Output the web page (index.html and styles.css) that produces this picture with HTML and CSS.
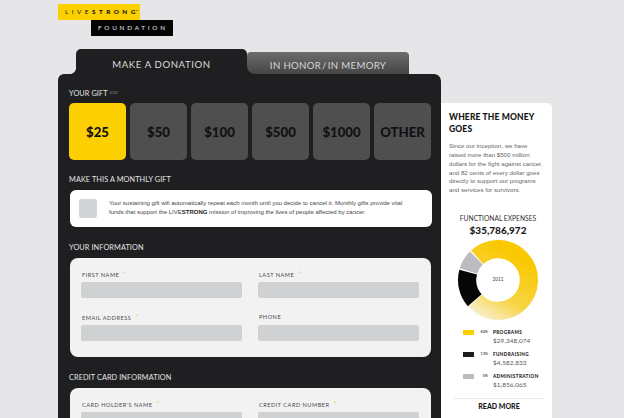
FILE: index.html
```html
<!DOCTYPE html>
<html lang="en">
<head>
<meta charset="utf-8">
<title>Livestrong Foundation</title>
<link rel="stylesheet" href="styles.css">
</head>
<body>
<div class="page">
  <header class="logo">
    <div class="logo-top">LIVE<b>STRON<span class="last">G</span></b><sup>™</sup></div>
    <div class="logo-bottom">FOUNDATION</div>
  </header>
  <nav class="tabs">
    <div class="tab active">MAKE A DONATION</div>
    <div class="tab other">IN HONOR&#8202;/&#8202;IN MEMORY</div>
  </nav>
  <div class="main">
    <form class="panel">
      <h2 class="title first">YOUR GIFT <small>USD</small></h2>
      <div class="amounts">
        <div class="amount selected">$25</div>
        <div class="amount">$50</div>
        <div class="amount">$100</div>
        <div class="amount">$500</div>
        <div class="amount">$1000</div>
        <div class="amount">OTHER</div>
      </div>
      <h2 class="title">MAKE THIS A MONTHLY GIFT</h2>
      <div class="monthly">
        <div class="check"></div>
        <p>Your sustaining gift will automatically repeat each month until you decide to cancel it. Monthly gifts provide vital funds that support the LIVE<b>STRONG</b> mission of improving the lives of people affected by cancer.</p>
      </div>
      <h2 class="title">YOUR INFORMATION</h2>
      <div class="card">
        <div class="field"><label>FIRST NAME <i>*</i></label><div class="input"></div></div>
        <div class="field"><label>LAST NAME <i>*</i></label><div class="input"></div></div>
        <div class="field"><label>EMAIL ADDRESS <i>*</i></label><div class="input"></div></div>
        <div class="field"><label>PHONE</label><div class="input"></div></div>
      </div>
      <h2 class="title">CREDIT CARD INFORMATION</h2>
      <div class="card">
        <div class="field"><label>CARD HOLDER'S NAME <i>*</i></label><div class="input"></div></div>
        <div class="field"><label>CREDIT CARD NUMBER <i>*</i></label><div class="input"></div></div>
      </div>
    </form>
    <aside class="side">
      <h3>WHERE THE MONEY GOES</h3>
      <p class="intro">Since our inception, we have raised more than $500 million dollars for the fight against cancer, and 82 cents of every dollar goes directly to support our programs and services for survivors.</p>
      <div class="fe-title">FUNCTIONAL EXPENSES</div>
      <div class="fe-total">$35,786,972</div>
      <div class="donut">
        <svg width="82" height="82" viewBox="0 0 82 82">
          <defs>
            <linearGradient id="yg" gradientUnits="userSpaceOnUse" x1="60" y1="15" x2="22" y2="80">
              <stop offset="0" stop-color="#f9c800"/>
              <stop offset="0.6" stop-color="#f8d548"/>
              <stop offset="1" stop-color="#f7f1dc"/>
            </linearGradient>
          </defs>
          <path class="seg" stroke="url(#yg)" d="M20.16 18.25 A30.85 30.85 0 1 1 18.25 61.84"/>
          <path class="seg" stroke="#060606" d="M17.72 61.24 A30.85 30.85 0 0 1 11.2 33.02"/>
          <path class="seg" stroke="#bcbcc0" d="M11.5 31.98 A30.85 30.85 0 0 1 19.38 19"/>
        </svg>
        <span>2011</span>
      </div>
      <div class="legend">
        <span class="swatch yellow"></span><span class="pct">82%</span><div class="info"><b>PROGRAMS</b><span>$29,348,074</span></div>
      </div>
      <div class="legend">
        <span class="swatch black"></span><span class="pct">13%</span><div class="info"><b>FUNDRAISING</b><span>$4,582,833</span></div>
      </div>
      <div class="legend">
        <span class="swatch grey"></span><span class="pct">5%</span><div class="info"><b>ADMINISTRATION</b><span>$1,856,065</span></div>
      </div>
      <div class="more">READ MORE</div>
    </aside>
  </div>
</div>
</body>
</html>
```
FILE: styles.css
```css
* { box-sizing: border-box; }
html, body { margin: 0; height: 100%; overflow: hidden; }
body { background: #e6e6e8; font-family: "Lato", sans-serif; }
.page { width: 624px; height: 418px; overflow: hidden; padding: 4px 0 0 58px; }

.logo { height: 32px; width: 115px; }
.logo-top {
  width: 82px; height: 16px; background: #fccf00; color: #111;
  font-size: 6.3px; letter-spacing: 3.5px; line-height: 16px; padding-left: 7px; white-space: nowrap;
}
.logo-top b { font-weight: 900; }
.logo-top .last { letter-spacing: 0.6px; }
.logo-top sup { font-size: 3px; letter-spacing: 0; vertical-align: 2px; line-height: 0; }
.logo-bottom {
  width: 82px; height: 16px; margin-left: 33px; background: #050505; color: #e8e8e8;
  font-size: 6.3px; letter-spacing: 2.8px; line-height: 16px; padding-left: 7px; white-space: nowrap;
}

.tabs { display: flex; align-items: flex-end; margin: 13px 0 0 18px; height: 25px; }
.tab {
  position: relative; text-align: center; color: #d6d6d6; font-size: 9.6px; letter-spacing: 0.6px; white-space: nowrap;
}
.tab.active {
  width: 171px; height: 25px; line-height: 31px; background: #1f1f21; border-radius: 5px 5px 0 0; color: #dcdcdc;
}
.tab.active::before {
  content: ""; position: absolute; left: -6px; bottom: 0; width: 6px; height: 6px;
  background: radial-gradient(circle at 0 0, transparent 5.6px, #1f1f21 6.2px);
}
.tab.other {
  width: 162px; height: 22px; line-height: 27px; letter-spacing: 0.35px;
  background: linear-gradient(#6d6d6e, #454546); border-radius: 4px 4px 0 8px;
}
.tab.other::before {
  content: ""; position: absolute; left: 0; bottom: 0; width: 9px; height: 9px; background: #1f1f21; z-index: -1;
}

.main { display: flex; align-items: flex-start; }
.panel {
  width: 383px; height: 360px; background: #1f1f21; border-radius: 6px 7px 0 0; padding: 13px 9px 0 11px;
}
.title {
  margin: 15px 0 6px; font-size: 7.3px; line-height: 11px; font-weight: 400; color: #e4e4e4; letter-spacing: 0.1px; height: 10px;
}
.title.first { margin-top: 0; }
.title small { font-size: 4px; color: #888; letter-spacing: 0.3px; vertical-align: 2px; }

.amounts { display: flex; gap: 4px; }
.amounts + .title { margin-top: 13.5px; }
.amount {
  width: 57px; height: 57px; border-radius: 5px; background: #4f4f50; color: #111;
  display: flex; align-items: center; justify-content: center;
  font-size: 13.2px; font-weight: 900; white-space: nowrap;
}
.amount.selected { background: #fccf00; }

.monthly {
  display: flex; align-items: center; gap: 12px; height: 37.5px; width: 362px; margin-left: 1px;
  background: #fff; border-radius: 6px; padding-left: 9px;
}
.monthly + .title { margin-top: 14.5px; }
.check { flex: none; width: 18px; height: 19px; background: #d2d3d5; border-radius: 3px; }
.monthly p { margin: 0; font: 6px/9px "Liberation Sans", sans-serif; color: #444; width: 300px; }
.monthly b { color: #222; }

.card {
  display: grid; grid-template-columns: 160.5px 160.5px; column-gap: 16.5px; row-gap: 15px; align-content: start;
  width: 361px; height: 99px; margin-left: 1px; background: #f2f2f2; border-radius: 8px; padding: 12px 12px 0 11px;
}
.card + .title { margin-top: 15.5px; }
.field label {
  display: block; height: 12px; padding-left: 1px; font-size: 5.6px; line-height: 8px; letter-spacing: 0.5px; color: #4a4a4a;
}
.field i { color: #f4d65c; font-style: normal; font-size: 7px; margin-left: 2px; }
.input { height: 16px; background: #d0d1d3; border-radius: 2px; }

.side {
  width: 111px; height: 331px; margin-top: 29px; background: #fff; border-radius: 0 5px 0 0; padding: 8px 5px 0 8px;
}
.side h3 {
  margin: 0; font-size: 8.5px; line-height: 12px; font-weight: 900; letter-spacing: 0.15px; color: #161616;
}
.intro { width: 94px; margin: 7.3px 0 0; font: 6.15px/8.8px "Liberation Sans", sans-serif; color: #666; }
.fe-title { margin-top: 19.4px; text-align: center; font-size: 6.7px; line-height: 9px; color: #333; white-space: nowrap; }
.fe-total { text-align: center; font-size: 10px; line-height: 14px; font-weight: 900; color: #1c1c1c; }
.donut { position: relative; width: 82px; height: 82px; margin: 2px auto 0; }
.donut svg { display: block; }
.seg { fill: none; stroke-width: 18.3; }
.donut span { position: absolute; left: 0; right: 0; top: 36px; text-align: center; font-size: 4.8px; line-height: 9px; color: #444; }

.legend { display: flex; align-items: flex-start; height: 22px; }
.donut + .legend { margin-top: 7px; }
.swatch { flex: none; width: 11px; height: 5px; margin: 2px 0 0 14px; }
.swatch.yellow { background: #fccf00; }
.swatch.black { background: #1d1d1d; }
.swatch.grey { background: #bcbcc0; }
.pct { width: 14px; text-align: right; font-size: 3.8px; line-height: 8px; font-weight: 700; color: #555; flex: none; }
.info { margin-left: 5px; }
.info b { display: block; font-size: 4.6px; line-height: 8px; font-weight: 900; color: #222; letter-spacing: 0.4px; white-space: nowrap; }
.info span { display: block; font-size: 6.4px; line-height: 9px; color: #555; letter-spacing: 0.1px; white-space: nowrap; }
.more {
  margin: 3.5px 3px 0 5px; border-top: 1px solid #e8e8e8; text-align: center; font-size: 7px; line-height: 14px; font-weight: 900; color: #1c1c1c;
}
```
